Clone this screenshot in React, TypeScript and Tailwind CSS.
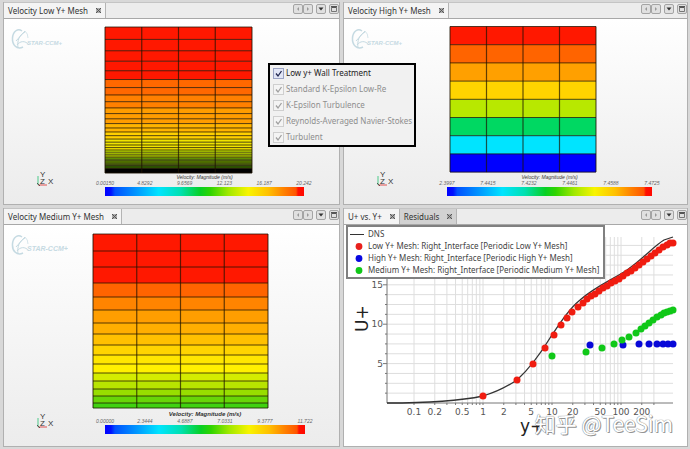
import React from "react";

type MeshProps = { x: number; width: number; rows: number[]; fills: string[] };
type Scale = { x: number; y: number; width: number; labels: string[]; title: string; large?: boolean };

function Logo({ full }: { full?: boolean }) {
  return (
    <g transform="translate(4 9)" fill="none" stroke="#b8d2dc" opacity="0.8">
      <path d="M14 3C10 0 5 3 4.500 10C4 17 9 22 15 19" strokeWidth="1.500" />
      <path d="M17 4C11 7 9 13 10 20M8 13L17 3M9 17C12 13 17 12 21 17" strokeWidth="1" />
      <path d="M17 3A9 9 0 0 1 20 10" strokeWidth="0.700" />
      <text
        x="19"
        y="17"
        fill="#b8d2dc"
        stroke="none"
        fontStyle="italic"
        fontWeight="bold"
        fontSize={full ? 7 : 6}
        fontFamily="Liberation Sans, sans-serif"
      >
        STAR-CCM+
      </text>
    </g>
  );
}

function Triad({ y }: { y: number }) {
  return (
    <g transform={`translate(33 ${y})`} fontFamily="Liberation Sans, sans-serif" fontSize="8" fill="#333">
      <path d="M1 5V14" stroke="#4fc98a" strokeWidth="1" />
      <path d="M1 14H10" stroke="#e05050" strokeWidth="1" />
      <path d="M0 12L3 15" stroke="#555" strokeWidth="1" />
      <text x="3" y="6">Y</text>
      <text x="3" y="13">Z</text>
      <text x="11" y="13">X</text>
    </g>
  );
}

function Mesh({ x, width, rows, fills }: MeshProps) {
  const top = rows[0];
  const bottom = rows[rows.length - 1];
  return (
    <g>
      {fills.map((fill, i) => (
        <rect key={i} x={x} y={rows[i]} width={width} height={rows[i + 1] - rows[i] + 0.1} fill={fill} />
      ))}
      {rows.map((y, i) => (
        <path key={i} d={`M${x} ${y}H${x + width}`} stroke="#1c1200" strokeWidth="1" strokeOpacity="0.75" />
      ))}
      {[0, 1, 2, 3, 4].map((i) => (
        <path
          key={i}
          d={`M${x + (width * i) / 4} ${top}V${bottom}`}
          stroke="#1c1200"
          strokeWidth="1.200"
          strokeOpacity="0.7"
        />
      ))}
    </g>
  );
}

const ramp: [number, string][] = [
  [0, "#0000ff"], [3, "#0010ff"], [5, "#0050ff"], [16, "#0098ff"], [27, "#00e4ff"], [38, "#00e0b0"],
  [48, "#08d024"], [53, "#30d400"], [62, "#a0e800"], [72, "#f8f400"], [82, "#ffc000"], [90, "#ff8000"],
  [96, "#ff5400"], [97, "#ff1000"], [100, "#ff0800"],
];

function ColorScale({ x, y, width, labels, title, large }: Scale) {
  const id = `ramp-${x}-${y}`;
  return (
    <g fontFamily="Liberation Sans, sans-serif" fontStyle="italic" fill="#666" textAnchor="middle">
      <defs>
        <linearGradient id={id}>
          {ramp.map(([at, color]) => (
            <stop key={at} offset={`${at}%`} stopColor={color} />
          ))}
        </linearGradient>
      </defs>
      <text
        x={x + width / 2}
        y={y - (large ? 9 : 8)}
        fontSize={large ? 6 : 5}
        fontWeight={large ? "bold" : "normal"}
        fill="#333"
      >
        {title}
      </text>
      {labels.map((label, i) => (
        <text key={label} x={x + (width * i) / 5} y={y - 2} fontSize="5">
          {label}
        </text>
      ))}
      <rect x={x} y={y} width={width} height="9" fill={`url(#${id})`} />
    </g>
  );
}

function Scene({ width, height, mesh, scale }: { width: number; height: number; mesh: MeshProps; scale: Scale }) {
  return (
    <svg viewBox={`0 0 ${width} ${height}`} className="block h-auto w-full" role="img" aria-label={scale.title}>
      <Logo full={scale.large} />
      <Mesh {...mesh} />
      <Triad y={scale.y - (scale.large ? 12 : 16)} />
      <ColorScale {...scale} />
    </svg>
  );
}

// Near-wall refinement: each layer is a fixed ratio thinner than the one above.
const lowRows = [8];
for (let i = 0, h = 12.4; i < 30; i++, h *= 0.917) lowRows.push(lowRows[i] + h);
const lowFills = lowRows.slice(0, -1).map((y) => {
  if (y < 60) return "#ff1800";
  if (y < 74) return "#ff6800";
  if (y < 87) return "#ff8000";
  if (y < 100) return "#ff9c00";
  if (y < 110) return "#ffb400";
  if (y < 120) return "#ffd000";
  if (y < 130) return "#f0e400";
  if (y < 138) return "#c8e800";
  return "#80c800";
});
// The layers against the wall are too thin to tell apart.
lowRows.push(149.5, 154);
lowFills.push("#2c5000", "#000000");

const highRows = [0, 1, 2, 3, 4, 5, 6, 7, 8].map((i) => 7.5 + i * 18.2);
const highFills = ["#ff1800", "#ff6400", "#ffa000", "#ffd400", "#b8e800", "#00d862", "#00e4ff", "#0000ff"];
const mediumRows = [9, 26, 42, 58, 72, 85, 98, 109, 120, 130, 139, 148, 156, 164, 171, 178, 183];
const mediumFills = [
  "#ff1800", "#ff1800", "#ff1800", "#ff6400", "#ff8400", "#ff9e00", "#ffae00", "#ffc000",
  "#ffd400", "#ffe600", "#fff000", "#d4ec00", "#b8e400", "#98de00", "#68d608", "#40d210",
];

const X_ONE = 139;
const DECADE = 69;
const Y_ZERO = 178;
const UNIT = 7.88;
const px = (v: number) => X_ONE + Math.log10(v) * DECADE;
const py = (u: number) => Y_ZERO - u * UNIT;

const gridX: number[] = [];
for (const base of [0.1, 1, 10, 100])
  for (let m = 1; m < 10; m++) if (base * m < 400) gridX.push(base * m);

const dns =
  "M43 178C90 178 115 176 139 171C153 167 164 161 173 155C185 144 195 131 206 113C216 98 225 84 236 75C252 61 268 55 283 45C300 33 310 21 320 15L329 12";
const red: [number, number][] = [
  [139, 171], [173, 155], [189, 139], [201, 123], [210, 110], [217, 100], [223, 93], [228, 87], [234, 82],
  [239, 78], [243, 74], [247, 71], [251, 69], [255, 66], [259, 63], [263, 61], [267, 58], [271, 56],
  [275, 54], [279, 51], [283, 48], [287, 46], [291, 43], [295, 40], [299, 37], [303, 34], [307, 31],
  [311, 28], [315, 25], [319, 22], [323, 20], [326, 18], [329, 18],
];
const green: [number, number][] = [
  [208, 131], [242, 127], [258, 123], [270, 119], [278, 115], [285, 112], [292, 108], [297, 104],
  [301, 101], [305, 98], [309, 95], [313, 92], [317, 90], [320, 88], [323, 87], [326, 86], [329, 85],
];
const blue: [number, number][] = [
  [246, 120], [279, 120], [295, 119], [305, 119], [313, 119], [319, 119], [324, 119], [329, 119],
];

function Dots({ points, color }: { points: [number, number][]; color: string }) {
  return (
    <g fill={color}>
      {points.map(([x, y]) => (
        <circle key={`${x}-${y}`} cx={x} cy={y} r="3.500" />
      ))}
    </g>
  );
}

function Plot() {
  return (
    <svg viewBox="0 0 343 221" className="block h-auto w-full bg-white" role="img" aria-label="U+ vs. Y+">
      <g stroke="#dedede" strokeWidth="1">
        {gridX.map((v) => (
          <path key={v} d={`M${px(v)} 12V${Y_ZERO}`} />
        ))}
        {Array.from({ length: 16 }, (_, i) => (i + 1) * 1.25).map((u) => (
          <path key={u} d={`M43 ${py(u)}H329`} />
        ))}
      </g>
      <g stroke="#777" strokeWidth="1">
        <path d={`M43 12V${Y_ZERO}H329`} fill="none" />
        {gridX.map((v) => (
          <path key={v} d={`M${px(v)} ${Y_ZERO}v2`} />
        ))}
        {Array.from({ length: 16 }, (_, i) => (i + 1) * 1.25).map((u) => (
          <path key={u} d={`M${u % 5 ? 41 : 39} ${py(u)}H43`} />
        ))}
      </g>
      <path d={dns} fill="none" stroke="#333" strokeWidth="1.300" />
      <Dots points={blue} color="#0808d8" />
      <Dots points={red} color="#f01c10" />
      <Dots points={green} color="#10c818" />
      <g fontFamily="DejaVu Sans, sans-serif" fontSize="9" fill="#555">
        {[5, 10, 15].map((u) => (
          <text key={u} x="39" y={py(u) + 3} textAnchor="end">{u}</text>
        ))}
        {[0.1, 0.2, 0.5, 1, 2, 5, 10, 20, 50, 100, 200].map((v) => (
          <text key={v} x={px(v)} y="190" textAnchor="middle">{v}</text>
        ))}
      </g>
      <g fontFamily="DejaVu Sans, sans-serif" fontSize="17" fill="#222">
        <text x="176" y="207">y+</text>
        <text transform="translate(24 107) rotate(-90)">U+</text>
      </g>
    </svg>
  );
}

function Tab({ label, active = true }: { label: string; active?: boolean }) {
  return (
    <button
      role="tab"
      aria-selected={active}
      className={`flex h-full items-center gap-2 border-r border-[#b4b4b4] px-1 whitespace-nowrap ${
        active ? "bg-[#f4f4f4]" : "bg-[#d2d2d2]"
      }`}
    >
      {label}
      <svg viewBox="0 0 5 5" className="size-[5px]" aria-hidden="true">
        <rect width="5" height="5" fill="#aaa" />
        <path d="M0 0L5 5M5 0L0 5" stroke="#555" />
      </svg>
    </button>
  );
}

const toolButton = "flex h-[10px] items-center justify-center rounded-[2px] border border-[#a4a4a4] bg-[#e0e0e0]";

function Panel({ tabs, children }: { tabs: string[]; children: React.ReactNode }) {
  return (
    <section className="min-w-0 border-x border-b border-[#b0b0b0] bg-[#ececec]">
      <header className="flex h-4 items-start justify-between border-t border-[#c4c4c4] text-[8px]">
        <div role="tablist" className="flex h-full">
          {tabs.map((tab, i) => (
            <Tab key={tab} label={tab} active={i === 0} />
          ))}
        </div>
        <div className="flex gap-[3px] pt-px">
          <div className="flex">
            <button aria-label="Previous tab" className={`${toolButton} w-[10px]`}>
              <svg viewBox="0 0 4 4" className="size-1"><path d="M3 0L1 2L3 4Z" fill="#999" /></svg>
            </button>
            <button aria-label="Next tab" className={`${toolButton} w-[10px]`}>
              <svg viewBox="0 0 4 4" className="size-1"><path d="M1 0L3 2L1 4Z" fill="#999" /></svg>
            </button>
          </div>
          <button aria-label="List tabs" className={`${toolButton} w-[10px]`}>
            <svg viewBox="0 0 6 4" className="h-1 w-[6px]"><path d="M0.500 0.500H5.500L3 3.500Z" fill="#333" /></svg>
          </button>
          <button aria-label="Maximize" className={`${toolButton} w-[10px]`}>
            <svg viewBox="0 0 6 6" className="size-[6px]">
              <path d="M0 1H6" stroke="#555" strokeWidth="2" />
              <path d="M0.500 1V5.500H5.500V1" fill="none" stroke="#777" />
            </svg>
          </button>
        </div>
      </header>
      <div className="relative border-t border-[#a8a8a8] bg-linear-to-b from-white to-[#ececec]">{children}</div>
    </section>
  );
}

const legend = [
  ["Low Y+ Mesh: Right_Interface [Periodic Low Y+ Mesh]", "#e8201c"],
  ["High Y+ Mesh: Right_Interface [Periodic High Y+ Mesh]", "#0808e0"],
  ["Medium Y+ Mesh: Right_Interface [Periodic Medium Y+ Mesh]", "#10c818"],
];

function Legend() {
  return (
    <ul className="absolute top-0 left-[2px] border-2 border-[#808080] bg-white py-px pr-1 pl-[2px] text-[8px] leading-3 text-[#444]">
      <li className="flex items-center gap-1">
        <span className="h-px w-[14px] bg-[#333]" />
        DNS
      </li>
      {legend.map(([label, color]) => (
        <li key={label} className="flex items-center gap-1 whitespace-nowrap">
          <svg viewBox="0 0 14 7" className="h-[7px] w-[14px]"><circle cx="9" cy="3.500" r="3.400" fill={color} /></svg>
          {label}
        </li>
      ))}
    </ul>
  );
}

const models = [
  "Low y+ Wall Treatment",
  "Standard K-Epsilon Low-Re",
  "K-Epsilon Turbulence",
  "Reynolds-Averaged Navier-Stokes",
  "Turbulent",
];

function ModelDialog() {
  return (
    <fieldset className="absolute top-[63px] left-[268px] flex w-[148px] flex-col border-2 border-black bg-[#f1f1f1] pl-[3px] text-[8px] leading-4">
      {models.map((model, i) => (
        <label
          key={model}
          className={`flex h-4 items-center gap-[2px] whitespace-nowrap ${i === 0 ? "text-[#222]" : "text-[#8e8e8e]"}`}
        >
          <span className="grid size-[11px] shrink-0">
            <input
              type="checkbox"
              defaultChecked
              disabled={i > 0}
              className="col-start-1 row-start-1 size-[11px] appearance-none border border-[#9ca4c4] bg-[#e2e6f6] disabled:border-[#cfcfcf] disabled:bg-[#f4f4f4]"
            />
            <svg viewBox="0 0 11 11" className="pointer-events-none col-start-1 row-start-1 size-[11px]">
              <path d="M3 5.500L5 8L8.500 3" fill="none" stroke={i === 0 ? "#222850" : "#a0a0a0"} strokeWidth="1.300" />
            </svg>
          </span>
          {model}
        </label>
      ))}
    </fieldset>
  );
}

export default function App() {
  return (
    <main className="relative grid grid-cols-[337fr_345fr] gap-[3px] bg-[#d8d8d8] pt-[2px] pr-[2px] pb-[2px] pl-[3px] font-['Noto_Sans',sans-serif] text-[#333]">
      <Panel tabs={["Velocity Low Y+ Mesh"]}>
        <Scene
          width={335}
          height={185}
          mesh={{ x: 101, width: 147, rows: lowRows, fills: lowFills }}
          scale={{
            x: 101, y: 168, width: 199, title: "Velocity: Magnitude (m/s)",
            labels: ["0.00150", "4.8292", "9.6569", "12.123", "16.187", "20.242"],
          }}
        />
      </Panel>
      <Panel tabs={["Velocity High Y+ Mesh"]}>
        <Scene
          width={343}
          height={185}
          mesh={{ x: 106, width: 146, rows: highRows, fills: highFills }}
          scale={{
            x: 103, y: 168, width: 205, title: "Velocity: Magnitude (m/s)",
            labels: ["2.3997", "7.4415", "7.4232", "7.4461", "7.4588", "7.4725"],
          }}
        />
      </Panel>
      <Panel tabs={["Velocity Medium Y+ Mesh"]}>
        <Scene
          width={335}
          height={221}
          mesh={{ x: 89, width: 175, rows: mediumRows, fills: mediumFills }}
          scale={{
            x: 101, y: 200, width: 200, title: "Velocity: Magnitude (m/s)", large: true,
            labels: ["0.00000", "2.3444", "4.6887", "7.0331", "9.3777", "11.722"],
          }}
        />
      </Panel>
      <Panel tabs={["U+ vs. Y+", "Residuals"]}>
        <Plot />
        <Legend />
        <p className="absolute right-[14px] bottom-[11px] font-['Noto_Sans_CJK_SC',sans-serif] text-[21px] leading-6 whitespace-nowrap text-white [text-shadow:0_0_1px_#888,0_0_1px_#888,1px_1px_0_#999]">
          知乎 @TeeSim
        </p>
      </Panel>
      <ModelDialog />
    </main>
  );
}
